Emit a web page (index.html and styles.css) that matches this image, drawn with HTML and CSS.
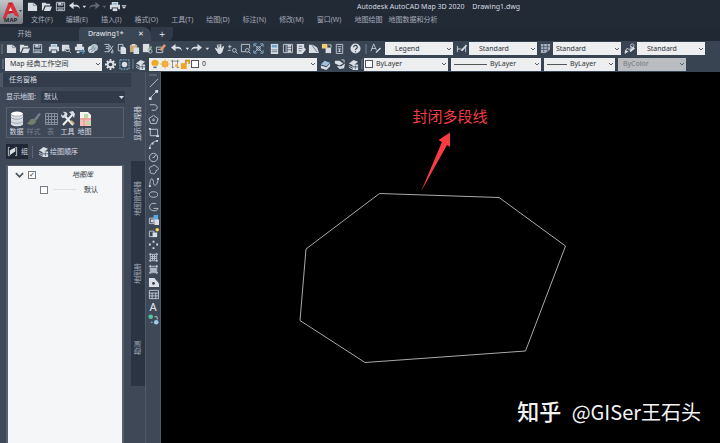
FILE: index.html
```
<!DOCTYPE html>
<html lang="zh-CN">
<head>
<meta charset="utf-8">
<title>Autodesk AutoCAD Map 3D 2020 - Drawing1.dwg</title>
<link rel="stylesheet" href="styles.css">
</head>
<body>
<svg class="sprite" aria-hidden="true">
  <symbol id="new" viewBox="0 0 12 12"><path class="f" d="M1 2h6l4 3v6H1z"/><path d="M7 2v3h4" fill="none" stroke="#8792a0"/></symbol>
  <symbol id="open" viewBox="0 0 12 12"><path class="f" d="M1 2h4l1 1h4v2H4l-2 5H1z"/><path class="f" d="M5 6h7l-2 5H3z"/></symbol>
  <symbol id="save" viewBox="0 0 12 12"><path class="s" d="M1.500 1.500h9v9h-9zM3.500 1.500v3h5v-3M2 7.500h8M3 9h6"/><path class="f" d="M4 2h3v2H4z"/></symbol>
  <symbol id="print" viewBox="0 0 12 12"><path class="f" d="M3 1h7v3h2v5h-2V7H3v2H1V4h2z"/><path d="M4 2h5v2H4z" fill="#8ebbd1"/><path class="f" d="M4 8h5v3H4z"/></symbol>
  <symbol id="preview" viewBox="0 0 12 12"><path class="f" d="M1 2h8v5H4v2H1z"/><circle class="s" cx="7" cy="7" r="2.500"/><path class="s" d="m9 9 2 2"/></symbol>
  <symbol id="publish" viewBox="0 0 12 12"><path class="f" d="M3 1h6v3h2v4H1V4h2z"/><path d="M6 9h5M9 7l3 2-3 3" fill="none" stroke="#75b9dc"/><path class="f" d="M3 9h3v2H3z"/></symbol>
  <symbol id="globe" viewBox="0 0 12 12"><circle class="f" cx="5" cy="7" r="4"/><circle cx="8" cy="5" r="4" fill="#b5c3cc"/><path d="M2 8c4-1 5-3 5-5M4 10c3-1 4-3 5-5" fill="none" stroke="#708295"/></symbol>
  <symbol id="cut" viewBox="0 0 12 12"><path class="s" d="M1.500 1.500h5v8h-5M3 4h3M3 6h3m1-4 4 7m0-6-5 7"/><circle class="s" cx="10" cy="10" r="1"/></symbol>
  <symbol id="copy" viewBox="0 0 12 12"><path class="s" d="M2.500 1.500h5v7h-5z"/><path class="f" d="M5 4h4l2 2v6H5z"/></symbol>
  <symbol id="paste" viewBox="0 0 12 12"><path d="M1 2h8v8H1z" fill="#c7aa78"/><path class="f" d="M3 1h4v2H3zM5 5h6v7H5z"/></symbol>
  <symbol id="match" viewBox="0 0 12 12"><path class="f" d="M1 1h7v9H1z"/><path d="m6 7 4-4 1 2-3 4z" fill="#8eb284"/><circle class="s" cx="9" cy="9" r="2"/></symbol>
  <symbol id="edit" viewBox="0 0 12 12"><path class="s" d="M1.500 4.500h7v6h-7zM3 7h4"/><path d="m5 7 5-6 2 2-5 6z" fill="#dc986f"/></symbol>
  <symbol id="undo" viewBox="0 0 12 12"><path class="f" d="m0 5 5-4v3h3c2 0 4 2 4 5-1-2-2-3-4-3H5v3z"/></symbol>
  <symbol id="redo" viewBox="0 0 12 12"><path class="f" d="M12 5 7 1v3H4C2 4 0 6 0 9c1-2 2-3 4-3h3v3z"/></symbol>
  <symbol id="down" viewBox="0 0 8 12"><path class="f" d="M2 5h5L4.500 8z"/></symbol>
  <symbol id="custom" viewBox="0 0 8 12"><path class="f" d="M1 4h6v1H1zm0 2h6L4 9z"/></symbol>
  <symbol id="hand" viewBox="0 0 12 12"><path class="f" d="M3 2h1l1 4V1h1v5l1-5h1v5l2-3 1 1-2 6-2 2H5L1 6l1-1 2 2z"/></symbol>
  <symbol id="zoomrt" viewBox="0 0 12 12"><path class="s" d="M1 4h4M3 2v4M1 8h3"/><circle class="s" cx="8" cy="8" r="2"/><path class="s" d="m9.500 9.500 2 2"/></symbol>
  <symbol id="zoomwin" viewBox="0 0 12 12"><path class="s" d="M6 9.500H1.500v-8h9V6"/><circle class="s" cx="8" cy="8" r="2"/><path class="s" d="m9.500 9.500 2 2"/></symbol>
  <symbol id="zoomext" viewBox="0 0 12 12"><path d="M1 4V1h3M8 1h3v3M11 8v3H8M4 11H1V8M2 2l8 8M10 2l-8 8" fill="none" stroke="#91bddc"/><circle class="s" cx="6" cy="6" r="2"/></symbol>
  <symbol id="props" viewBox="0 0 12 12"><path class="f" d="M2 1h8v11H2z"/><path d="M3 2h6v3H3z" fill="#68aacd"/><path d="M3 7.500h6M3 9.500h6" stroke="#69798b"/></symbol>
  <symbol id="center" viewBox="0 0 12 12"><path class="s" d="M1.500 1.500h10v9h-10zM4.500 1v10"/><path class="f" d="M6 2h4v2H6zm0 3h4v2H6zm0 3h4v2H6z"/></symbol>
  <symbol id="tools" viewBox="0 0 12 12"><path class="f" d="M2 1h8v4l2 2-4 5H2z"/><path d="M4 3.500h4M4 6h4M4 8.500h3" stroke="#617087"/></symbol>
  <symbol id="sheet" viewBox="0 0 12 12"><path class="f" d="M1 2h4l5 3 2 6H1z"/><path d="m4 2 6 8" stroke="#657285"/></symbol>
  <symbol id="markup" viewBox="0 0 12 12"><path class="f" d="M5 5h6v6H5z"/><path d="M1 1h6v5H1z" fill="#f1cf75"/><path class="s" d="M8 2h3v3"/></symbol>
  <symbol id="calc" viewBox="0 0 12 12"><path class="s" d="M2.500 1.500h7v10h-7zM4 4h4M4 6.500h4M4 9h4M6 6v4"/></symbol>
  <symbol id="help" viewBox="0 0 12 12"><circle class="f" cx="6" cy="6" r="5.500"/><path d="M4 4.500C4 2 8 2 8 4.500 8 6 6 6 6 7.500M6 9v1" fill="none" stroke="#344052" stroke-width="1.200"/></symbol>
  <symbol id="style" viewBox="0 0 12 12"><path class="s" d="M1 9 4 1l3 7M2 6h4"/><path class="f" d="m6 10 5-5 1 1-5 5z"/></symbol>
  <symbol id="dimstyle" viewBox="0 0 12 12"><path class="s" d="M1.500 3v7M10.500 2v8M1 6.500h5M2 5v3"/><path class="f" d="m5 8 6-6 1 1-5 6z"/></symbol>
  <symbol id="tabstyle" viewBox="0 0 12 12"><path d="M1 1h10v6l-5 4H1z" fill="#aab3c0"/><path d="M1 4h10M1 7h8M4 1v9M8 1v8" stroke="#566276"/></symbol>
  <symbol id="leader" viewBox="0 0 12 12"><path class="s" d="m1 11 2-5 3 1 3-4"/><circle class="s" cx="9" cy="3" r="2"/><path class="f" d="m6 8 4-4 2 2-5 4zM1 8l4 1-4 3z"/></symbol>
  <symbol id="gear" viewBox="0 0 12 12"><path d="M6 0v12M0 6h12M2 2l8 8M10 2l-8 8" stroke="#e2e6ea" stroke-width="2"/><circle class="f" cx="6" cy="6" r="4"/><circle cx="6" cy="6" r="2" fill="#35404f"/></symbol>
  <symbol id="space" viewBox="0 0 12 12"><path d="M1 1h10v10H1z" fill="none" stroke="#91c3e4" stroke-dasharray="2 1"/><circle class="f" cx="6" cy="6" r="3"/></symbol>
  <symbol id="layers" viewBox="0 0 12 12"><path class="f" d="m1 5 5-4 5 2-5 4z"/><path class="s" d="m1 7 4 2M1 9l4 2"/><path class="f" d="M5 6h6v6H5z"/><path d="M5 8.500h6M8 7v4" stroke="#59677b"/></symbol>
  <symbol id="layer2" viewBox="0 0 12 12"><path d="m1 6 4-4 6 2-4 4z" fill="#9fc0d8"/><path class="f" d="M1 7 7 9l4-4v3l-4 4-6-2z"/></symbol>
  <symbol id="layer3" viewBox="0 0 12 12"><path class="f" d="M1 2h5l4 3-4 2-5-2zM3 8h5l4-3-1 5-5 1z"/><path class="s" d="M8 1h3v3"/></symbol>
  <symbol id="bulb" viewBox="0 0 12 12"><path d="M3 8C0 5 2 1 6 1s6 4 3 7z" fill="#edac25"/><path d="M4 9h4v2H4z" fill="#6f7580"/></symbol>
  <symbol id="sun" viewBox="0 0 12 12"><circle cx="6" cy="6" r="4" fill="#f3a526"/><path d="M6 0v12M0 6h12M2 2l8 8M10 2l-8 8" stroke="#f3b650"/></symbol>
  <symbol id="freeze" viewBox="0 0 12 12"><path d="M3 1v10M9 1v10M1 2.500h10M2 10h3M8 10h3" fill="none" stroke="#858072"/><circle cx="8" cy="8" r="2" fill="#eab252"/></symbol>
  <symbol id="unlock" viewBox="0 0 12 12"><path d="M1 5h7v7H1z" fill="#efa522"/><path d="M7 6V2h4v4" fill="none" stroke="#d89421" stroke-width="2"/></symbol>
  <symbol id="chev" viewBox="0 0 8 8"><path d="m2 3 2 2 2-2" fill="none" stroke="#555d68"/></symbol>
  <symbol id="line" viewBox="0 0 12 12"><path class="s" d="m2 11 9-9"/></symbol>
  <symbol id="xline" viewBox="0 0 12 12"><path class="s" d="m2 10 8-8"/><path class="f" d="M1 9h3v3H1zM8 1h3v3H8z"/></symbol>
  <symbol id="pline" viewBox="0 0 12 12"><path class="s" d="M2 3h5c4 0 4 6 0 6H4"/></symbol>
  <symbol id="polygon" viewBox="0 0 12 12"><path class="s" d="m6 1.500 5 3.500-2 5.500H3L1 5z"/><circle class="s" cx="6" cy="6.500" r="1"/></symbol>
  <symbol id="rect" viewBox="0 0 12 12"><path class="s" d="M2.500 2.500h8v7h-8z"/><path class="f" d="M1 1h2v2H1zm8 8h3v2H9z"/></symbol>
  <symbol id="arc" viewBox="0 0 12 12"><path class="s" d="M2 10c0-4 3-7 8-8"/><path class="f" d="M1 9h2v2H1zm3-5h2v2H4zm5-3h2v2H9z"/></symbol>
  <symbol id="circle" viewBox="0 0 12 12"><circle class="s" cx="6" cy="6" r="4.500"/><path class="s" d="m6 6 3-3M5 6h2"/></symbol>
  <symbol id="cloud" viewBox="0 0 12 12"><path class="s" d="M3 8C0 6 2 2 4 3c2-3 5-1 5 0 4 1 2 4 0 4 0 3-3 5-4 3-2 1-4-1-2-2z"/></symbol>
  <symbol id="spline" viewBox="0 0 12 12"><path class="s" d="M2 10C2-2 6 2 6 6s4 5 5-4"/><path class="f" d="M1 9h2v2H1zm9-8h2v2h-2z"/></symbol>
  <symbol id="ellipse" viewBox="0 0 12 12"><ellipse class="s" cx="6" cy="6" rx="4.500" ry="3"/></symbol>
  <symbol id="earc" viewBox="0 0 12 12"><path class="s" d="M9 2C3 0 1 4 2 7s8 4 9 0H6"/></symbol>
  <symbol id="insert" viewBox="0 0 12 12"><path class="s" d="M1.500 4.500h5v6h-5z"/><path d="M6 1h5v6H6z" fill="#5da6e0"/><path class="f" d="M7 6h5v6H7zM3 6h3v3H3z"/></symbol>
  <symbol id="block" viewBox="0 0 12 12"><path class="s" d="M1.500 4.500h5v6h-5z"/><path class="f" d="M5 6h5v5H5z"/><circle cx="10" cy="3" r="2" fill="#eed657"/></symbol>
  <symbol id="point" viewBox="0 0 12 12"><path class="f" d="M5 2h2v2H5zM1 5h2v2H1zm8 0h2v2H9zM5 9h2v2H5z"/></symbol>
  <symbol id="hatch" viewBox="0 0 12 12"><path class="s" d="M1 2.500h10M1 9.500h10M2.500 1v10M9.500 1v10M3 5h6M3 7h6M5 3v6M7 3v6"/></symbol>
  <symbol id="gradient" viewBox="0 0 12 12"><path class="s" d="M1 2.500h10M1 9.500h10M2.500 1v10M9.500 1v10"/><path d="M3 4h6v5H3z" fill="#aeb8c4"/></symbol>
  <symbol id="region" viewBox="0 0 12 12"><path class="f" d="M1 1h6l5 6v4H1z"/><circle cx="6" cy="7" r="1.500" fill="#303b4c"/></symbol>
  <symbol id="table" viewBox="0 0 12 12"><path class="s" d="M1.500 1.500h10v9h-10zM1 4.500h10M1 7.500h10M4.500 4v7M8.500 4v7"/></symbol>
  <symbol id="multi" viewBox="0 0 12 12"><circle cx="3" cy="3" r="2.500" fill="#52c69b"/><circle cx="9" cy="9" r="2.500" fill="#9dcbec"/><path class="s" d="M7 3h3v3M5 9H3"/></symbol>
  <symbol id="data" viewBox="0 0 14 16"><path class="f" d="M1 3v10c0 3 12 3 12 0V3z"/><ellipse cx="7" cy="3" rx="6" ry="2.500" fill="#fff"/><path d="M1 6c0 3 12 3 12 0M1 10c0 3 12 3 12 0M1 3c0 3 12 3 12 0" fill="none" stroke="#9da7b0"/></symbol>
  <symbol id="brush" viewBox="0 0 14 16"><path d="m7 8 5-6 2 1-5 7z" fill="#8a95a1"/><path d="M7 8c-4-1-4 3-7 4 4 4 9 1 9-2z" fill="#8b9674"/></symbol>
  <symbol id="grid" viewBox="0 0 14 16"><path d="M1.500 2.500h12v11h-12zM1 5.500h12M1 8.500h12M1 11.500h12M4.500 2v11M7.500 2v11M10.500 2v11" fill="none" stroke="#a4adb8"/></symbol>
  <symbol id="wrench" viewBox="0 0 14 16"><path d="m3 4 9 10M12 3 2 14" stroke="#edf0f2" stroke-width="2"/><path class="f" d="M0 3l2 2 2-2-2-2c4-1 6 3 3 5S0 7 0 3zm8-2 4-1 2 3-1 4-2-3z"/><path d="m10 10 3 3" stroke="#d8b079" stroke-width="2"/></symbol>
  <symbol id="map" viewBox="0 0 14 16"><path d="M2 1h8l3 3v11H2z" fill="#f7f5ef"/><path d="M2 7h11v8H2z" fill="#f4bfb9"/><path d="M6 3h4v4H6zm3 7h4v4H9z" fill="#bbdca8"/><path d="M2 8h11M6 7v8" stroke="#e99489"/></symbol>
  <symbol id="group" viewBox="0 0 12 12"><path class="s" d="M3 1.500H1.500v9H3M9 1.500h1.500v9H9"/><path class="f" d="m3 5 3-2 3-1v4L6 8l-3 2z"/></symbol>
</svg>

<header class="top">
  <button class="logo" aria-label="应用程序菜单"><svg viewBox="0 0 24 24"><path d="M9 2h4l7 15-4-1-2-3-6 1-2 4-3 1z" fill="#c91f2d"/><path d="m9 2 3 5-6 11-3 1zM13 2l7 15-4-1-5-9z" fill="#d9343d"/><path d="m9 11 2-4 2 4z" fill="#f2dedd"/><path d="M20 10h3l-1.500 2z" fill="#333b46"/></svg><span>MAP</span></button>
  <div class="heading">
    <div class="quick">
      <button aria-label="新建"><svg><use href="#new"/></svg></button><button aria-label="打开"><svg><use href="#open"/></svg></button><button aria-label="保存"><svg><use href="#save"/></svg></button><button aria-label="放弃"><svg><use href="#undo"/></svg></button><button class="arrow" aria-label="放弃列表"><svg><use href="#down"/></svg></button><button class="dim" aria-label="重做"><svg><use href="#redo"/></svg></button><button class="arrow dim" aria-label="重做列表"><svg><use href="#down"/></svg></button><button aria-label="打印"><svg><use href="#print"/></svg></button><button class="arrow" aria-label="自定义"><svg><use href="#custom"/></svg></button>
      <h1>Autodesk AutoCAD Map 3D 2020 <span>Drawing1.dwg</span></h1>
    </div>
    <nav class="menu">
      <a href="#file">文件(F)</a><a href="#edit-menu">编辑(E)</a><a href="#insert-menu">插入(I)</a><a href="#format">格式(O)</a><a href="#tools-menu">工具(T)</a><a href="#draw">绘图(D)</a><a href="#dim">标注(N)</a><a href="#modify">修改(M)</a><a href="#window">窗口(W)</a><a class="tight" href="#mapdraw">地图绘图</a><a class="tight" href="#analysis">地图数据和分析</a>
    </nav>
  </div>
</header>

<div class="files">
  <button class="start">开始</button>
  <div class="current"><button>Drawing1*</button><button aria-label="关闭">✕</button></div>
  <button class="add" aria-label="新图形">+</button>
</div>

<div class="bars">
  <div class="bar">
    <i class="grip"></i>
    <div class="set"><button aria-label="新建"><svg><use href="#new"/></svg></button><button aria-label="打开"><svg><use href="#open"/></svg></button><button aria-label="保存"><svg><use href="#save"/></svg></button></div>
    <div class="set"><button aria-label="打印"><svg><use href="#print"/></svg></button><button aria-label="打印预览"><svg><use href="#preview"/></svg></button><button aria-label="发布"><svg><use href="#publish"/></svg></button><button aria-label="三维打印"><svg><use href="#globe"/></svg></button></div>
    <div class="set"><button aria-label="剪切"><svg><use href="#cut"/></svg></button><button aria-label="复制"><svg><use href="#copy"/></svg></button><button aria-label="粘贴"><svg><use href="#paste"/></svg></button><button aria-label="特性匹配"><svg><use href="#match"/></svg></button><button aria-label="块编辑器"><svg><use href="#edit"/></svg></button></div>
    <div class="set"><button aria-label="放弃"><svg><use href="#undo"/></svg></button><button class="arrow" aria-label="放弃列表"><svg><use href="#down"/></svg></button><button aria-label="重做"><svg><use href="#redo"/></svg></button><button class="arrow" aria-label="重做列表"><svg><use href="#down"/></svg></button></div>
    <div class="set"><button aria-label="平移"><svg><use href="#hand"/></svg></button><button aria-label="实时缩放"><svg><use href="#zoomrt"/></svg></button><button aria-label="窗口缩放"><svg><use href="#zoomwin"/></svg></button><button aria-label="范围缩放"><svg><use href="#zoomext"/></svg></button></div>
    <div class="set"><button aria-label="特性"><svg><use href="#props"/></svg></button><button aria-label="设计中心"><svg><use href="#center"/></svg></button><button aria-label="工具选项板"><svg><use href="#tools"/></svg></button><button aria-label="图纸集"><svg><use href="#sheet"/></svg></button><button aria-label="标记集"><svg><use href="#markup"/></svg></button><button aria-label="计算器"><svg><use href="#calc"/></svg></button></div>
    <div class="set"><button aria-label="帮助"><svg><use href="#help"/></svg></button></div>
    <i class="grip"></i>
    <button aria-label="文字样式"><svg><use href="#style"/></svg></button>
    <div class="combo c68"><select class="in" aria-label="文字样式列表"><option>Legend</option></select><svg class="chev"><use href="#chev"/></svg></div>
    <button class="pick" aria-label="标注样式"><svg><use href="#dimstyle"/></svg></button>
    <div class="combo c68"><select class="in" aria-label="标注样式列表"><option>Standard</option></select><svg class="chev"><use href="#chev"/></svg></div>
    <button class="pick" aria-label="表格样式"><svg><use href="#tabstyle"/></svg></button>
    <div class="combo c68"><select aria-label="表格样式列表"><option>Standard</option></select><svg class="chev"><use href="#chev"/></svg></div>
    <button class="pick" aria-label="多重引线样式"><svg><use href="#leader"/></svg></button>
    <div class="combo c68"><select class="in" aria-label="引线样式列表"><option>Standard</option></select><svg class="chev"><use href="#chev"/></svg></div>
  </div>
  <div class="bar second">
    <i class="grip"></i>
    <div class="combo c98"><select class="near" aria-label="工作空间"><option>Map 经典工作空间</option></select><svg class="chev"><use href="#chev"/></svg></div>
    <button aria-label="工作空间设置"><svg><use href="#gear"/></svg></button><button aria-label="我的工作空间"><svg><use href="#space"/></svg></button>
    <i class="grip"></i>
    <button aria-label="图层特性"><svg><use href="#layers"/></svg></button>
    <div class="combo c168"><svg><use href="#bulb"/></svg><svg><use href="#sun"/></svg><svg><use href="#freeze"/></svg><svg><use href="#unlock"/></svg><i class="swatch"></i><select aria-label="图层"><option>0</option></select><svg class="chev"><use href="#chev"/></svg></div>
    <button aria-label="置为当前"><svg><use href="#layer2"/></svg></button><button aria-label="上一个图层"><svg><use href="#layer3"/></svg></button><button aria-label="图层状态"><svg><use href="#layers"/></svg></button>
    <i class="grip"></i>
    <div class="combo c84"><i class="swatch"></i><select aria-label="颜色"><option>ByLayer</option></select><svg class="chev"><use href="#chev"/></svg></div>
    <div class="combo c90"><i class="rule"></i><select aria-label="线型"><option>ByLayer</option></select><svg class="chev"><use href="#chev"/></svg></div>
    <div class="combo c70"><i class="rule short"></i><select aria-label="线宽"><option>ByLayer</option></select><svg class="chev"><use href="#chev"/></svg></div>
    <div class="combo c68 off"><select class="near" aria-label="打印样式" disabled><option>ByColor</option></select><svg class="chev"><use href="#chev"/></svg></div>
  </div>
</div>

<main>
  <aside class="palette">
    <h2>任务窗格</h2>
    <div class="show"><label for="show">显示地图:</label><div class="drop"><select id="show"><option>默认</option></select><svg viewBox="0 0 8 12"><use href="#down"/></svg></div></div>
    <div class="tasks">
      <button><svg><use href="#data"/></svg>数据</button><button class="faded" disabled><svg><use href="#brush"/></svg>样式</button><button class="faded" disabled><svg><use href="#grid"/></svg>表</button><button><svg><use href="#wrench"/></svg>工具</button><button><svg><use href="#map"/></svg>地图</button>
    </div>
    <div class="views"><button class="on"><svg><use href="#group"/></svg>组</button><i></i><button><svg><use href="#layers"/></svg>绘图顺序</button></div>
    <div class="tree">
      <div class="node"><svg class="fold" viewBox="0 0 10 8"><path d="m1 2 4 4 4-4"/></svg><input type="checkbox" id="base" checked><label for="base"><em>地图库</em></label></div>
      <div class="node child"><input type="checkbox" id="layer"><i></i><label for="layer">默认</label></div>
    </div>
  </aside>
  <nav class="tabs"><button class="on">显示管理器</button><button>地图管理器</button><button>地图册</button><button>勘测</button></nav>
  <div class="draw">
    <i class="grip"></i>
    <button aria-label="直线"><svg><use href="#line"/></svg></button><button aria-label="构造线"><svg><use href="#xline"/></svg></button><button aria-label="多段线"><svg><use href="#pline"/></svg></button><button aria-label="多边形"><svg><use href="#polygon"/></svg></button><button aria-label="矩形"><svg><use href="#rect"/></svg></button><button aria-label="圆弧"><svg><use href="#arc"/></svg></button><button aria-label="圆"><svg><use href="#circle"/></svg></button><button aria-label="修订云线"><svg><use href="#cloud"/></svg></button><button aria-label="样条曲线"><svg><use href="#spline"/></svg></button><button aria-label="椭圆"><svg><use href="#ellipse"/></svg></button><button aria-label="椭圆弧"><svg><use href="#earc"/></svg></button><button aria-label="插入块"><svg><use href="#insert"/></svg></button><button aria-label="创建块"><svg><use href="#block"/></svg></button><button aria-label="点"><svg><use href="#point"/></svg></button><button aria-label="图案填充"><svg><use href="#hatch"/></svg></button><button aria-label="渐变色"><svg><use href="#gradient"/></svg></button><button aria-label="面域"><svg><use href="#region"/></svg></button><button aria-label="表格"><svg><use href="#table"/></svg></button><button class="letter" aria-label="多行文字">A</button><button aria-label="添加选定对象"><svg><use href="#multi"/></svg></button>
  </div>
  <section class="canvas" aria-label="绘图区">
    <svg class="plan" viewBox="0 0 559 371" preserveAspectRatio="xMinYMin meet"><path d="M218.500 121.500 338 125.500 404.500 174 364.500 279 204 290.500 139 248.500 145 177z" fill="none" stroke="#a9a9a9"/><path d="M260 119.500 281 70l-3.500-2L289 60.500V75l-3-2z" fill="#fb3b43"/></svg>
    <p class="note">封闭多段线</p>
    <p class="mark"><b>知乎</b> @GISer王石头</p>
  </section>
</main>
</body>
</html>
```

FILE: styles.css
```
* { box-sizing: border-box; }
body {
  margin: 0;
  min-height: 100vh;
  display: flex;
  flex-direction: column;
  overflow: hidden;
  background: #222a36;
  color: #d5dae1;
  font: 7px/12px "Noto Sans", "Noto Sans CJK SC", sans-serif;
}
h1, h2, p { margin: 0; font: inherit; }
button {
  padding: 0;
  border: 0;
  background: none;
  color: inherit;
  font: inherit;
  flex: none;
}
a { color: inherit; text-decoration: none; }
.sprite { position: absolute; width: 0; height: 0; }
.f { fill: #d9dee4; }
.s { fill: none; stroke: #c0c8d2; }
button svg, .combo svg { display: block; width: 11px; height: 11px; margin: auto; }

/* Title and menu */
.top { display: flex; height: 27px; }
.logo {
  width: 23px;
  height: 24px;
  background: linear-gradient(#c3c6c9, #7c8086);
  display: grid;
  border-radius: 0 0 2px 0;
}
.logo svg { grid-area: 1 / 1; width: 23px; height: 24px; }
.logo span { grid-area: 1 / 1; align-self: end; padding-right: 2px; font-size: 6px; line-height: 7px; font-weight: bold; color: #25282d; }
.heading { flex: 1; min-width: 0; }
.quick { display: flex; align-items: center; height: 13px; padding-left: 2px; }
.quick button { width: 14px; }
.quick .arrow { width: 6px; }
.arrow svg { width: 6px; }
.dim { opacity: .35; }
.quick h1 { flex: 1; padding-left: 230px; white-space: nowrap; }
.quick h1 span { margin-left: 6px; }
.menu { display: flex; gap: 13px; padding-left: 8px; color: #a4abb6; white-space: nowrap; }
.menu a { line-height: 13px; }
.menu .tight { margin-right: -7px; }

/* Drawing tabs */
.files { display: flex; height: 14px; line-height: 14px; align-items: stretch; background: #202834; }
.start { width: 79px; padding-right: 30px; background: #28313e; color: #adb4bf; }
.current { display: flex; justify-content: space-between; width: 72px; padding: 0 7px 0 9px; background: #3b4655; border-radius: 3px 8px 0 0; color: #eef1f4; }
.add { width: 22px; background: #303948; border-radius: 0 0 6px 0; font-size: 10px; }

/* Toolbars */
.bars { background: #394453; }
.bar { display: flex; align-items: center; gap: 3px; height: 15px; padding-left: 1px; white-space: nowrap; }
.bar button { width: 13px; }
.bar .arrow { width: 7px; }
.bar .pick { width: 10px; }
.second { gap: 1px; height: 16px; padding-left: 2px; }
.second .combo { margin: 0 1px; }
.set { display: flex; }
.grip { flex: none; width: 2px; height: 10px; background: #566171; }
.bar .grip { margin-right: -1px; }
.combo { flex: none; display: flex; align-items: center; height: 13px; background: #eceef0; color: #30343a; }
.combo svg { width: 10px; height: 10px; margin: 0; flex: none; }
.combo select {
  flex: 1;
  min-width: 0;
  height: 13px;
  padding: 0 3px;
  border: 0;
  appearance: none;
  background: none;
  color: inherit;
  font: inherit;
}
.combo select.near { padding-left: 5px; }
.combo select.in { padding-left: 10px; }
.combo .chev { width: 8px; height: 8px; margin-left: -8px; pointer-events: none; }
.c68 { width: 68px; }
.c70 { width: 71px; }
.c84 { width: 84px; }
.c90 { width: 90px; }
.c98 { width: 97px; }
.c168 { width: 168px; padding-left: 1px; }
.swatch { flex: none; width: 8px; height: 8px; margin-left: 1px; background: #fff; border: 1px solid #50565e; }
.rule { flex: none; width: 33px; height: 1px; margin-left: 3px; background: #555; }
.short { width: 20px; }
.combo.off { background: #b9bcc1; color: #74787f; }
.off select { opacity: 1; }

/* Workspace */
main { flex: 1; display: flex; min-height: 0; background: #3e4857; }
.palette { flex: none; width: 131px; display: flex; flex-direction: column; padding: 0 7px 0 6px; }
.palette h2 { height: 14px; margin: 1px -7px 0 -6px; padding-left: 6px; line-height: 14px; background: #333c4a; border-left: 3px solid #4d5766; }
.show { display: flex; gap: 8px; height: 20px; align-items: center; }
.show label { flex: none; width: 27px; white-space: nowrap; }
.drop { flex: 1; display: flex; align-items: center; height: 12px; margin-right: -1px; background: #303a48; }
.drop select { flex: 1; min-width: 0; padding: 0 3px; border: 0; appearance: none; background: none; color: inherit; font: inherit; }
.drop svg { width: 8px; height: 12px; margin-left: -8px; pointer-events: none; }
.tasks { display: flex; height: 31px; padding: 3px 0 0 1px; border: 1px solid #576171; }
.tasks button { width: 17px; line-height: 10px; }
.tasks svg { width: 14px; height: 16px; }
.tasks .faded { opacity: .7; color: #8b95a2; }
.views { display: flex; align-items: center; gap: 4px; height: 27px; white-space: nowrap; }
.views button { display: flex; gap: 1px; align-items: center; height: 15px; }
.views .on { width: 22px; padding-left: 1px; gap: 3px; background: #202835; }
.views i { width: 1px; height: 12px; background: #5c6675; margin-right: 1px; }
.tree { flex: 1; padding-top: 1px; background: #f4f6f8; border: solid #56606f; border-width: 1px 2px 0; color: #30343a; }
.node { display: flex; align-items: center; height: 15px; padding-left: 7px; }
.node input { flex: none; display: grid; place-items: center; appearance: none; width: 8px; height: 8px; margin: 0; border: 1px solid #777d84; background: #fff; }
.node input:checked::before { content: "✓"; font: 7px/6px "DejaVu Sans", sans-serif; color: #444; }
.node .fold { width: 9px; height: 8px; margin-right: 4px; fill: none; stroke: #50565e; stroke-width: 2; }
.node label { padding-left: 36px; }
.child { padding-left: 32px; }
.child i { width: 23px; height: 1px; margin-left: 5px; background: #dde1e5; }
.child label { padding-left: 8px; }
.tabs { flex: none; width: 14px; display: flex; flex-direction: column; padding-top: 14px; }
.tabs button { height: 75px; writing-mode: vertical-rl; text-orientation: sideways; transform: rotate(180deg); background: #2b3443; color: #a6afbb; text-align: center; }
.tabs .on { background: #3e4857; color: #d5dae1; }
.draw { flex: none; width: 16px; display: flex; flex-direction: column; align-items: center; border: solid #4f5a69; border-width: 0 1px; }
.draw .grip { width: 8px; height: 2px; margin: 2px 0 0; }
.draw button { width: 12px; height: 12px; }
.draw button:nth-of-type(even) { margin-bottom: 1px; }
.draw svg { width: 11px; height: 11px; }
.draw .letter { font-size: 11px; line-height: 12px; font-weight: 500; }
.canvas { flex: 1; min-width: 0; position: relative; background: #000; overflow: hidden; }
.plan { display: block; width: 100%; }
.note { position: absolute; left: 45%; top: 33px; color: #f23e43; font-size: 15px; line-height: 22px; }
.mark { position: absolute; right: 19px; bottom: 17px; color: #f4f4f4; font: 20px/28px "Noto Sans CJK SC", sans-serif; white-space: nowrap; }
.mark b { margin-right: 6px; font-weight: 500; font-size: 22px; }
```
